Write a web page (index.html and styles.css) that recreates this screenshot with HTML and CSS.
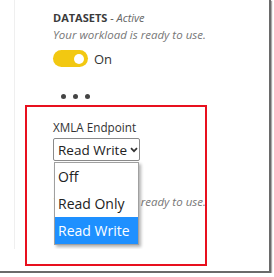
FILE: index.html
```html
<!DOCTYPE html>
<html>
<head>
<meta charset="utf-8">
<link rel="stylesheet" href="styles.css">
</head>
<body>
<div class="frame">
  <div class="panel">
    <div class="title"><span class="caps">DATASETS</span> <span class="state">- Active</span></div>
    <div class="desc">Your workload is ready to use.</div>
    <div class="toggle-row">
      <span class="toggle"><span class="knob"></span></span>
      <span class="toggle-label">On</span>
    </div>
    <div class="dots"><span></span><span></span><span></span></div>
    <div class="label">XMLA Endpoint</div>
    <div class="select-wrap">
      <div class="select">Read Write
        <svg class="chev" width="8" height="6" viewBox="0 0 8 6"><path d="M1 1.2 L4 4.2 L7 1.2" fill="none" stroke="#333" stroke-width="1.7"/></svg>
      </div>
      <ul class="options">
        <li>Off</li>
        <li>Read Only</li>
        <li class="sel">Read Write</li>
      </ul>
    </div>
    <div class="desc desc2">Your workload is ready to use.</div>
    <div class="label clipped">Max Memory (%)</div>
  </div>
  <div class="highlight"></div>
</div>
</body>
</html>
```

FILE: styles.css
```css
html, body {
  margin: 0;
  padding: 0;
  background: #fff;
}
body {
  font-family: "Open Sans", "Noto Sans", sans-serif;
  color: #333;
}
.frame {
  position: relative;
  width: 269px;
  height: 271px;
  border-right: 2px solid #6a6a6a;
  border-bottom: 2px solid #6a6a6a;
  box-shadow: 1px 1px 1px #aaa;
  background: #fff;
}
.panel {
  margin-left: 14px;
  border-left: 1px solid #efefef;
  padding-left: 38px;
  height: 249px;
  overflow: hidden;
  box-sizing: border-box;
}
.title {
  padding-top: 10px;
  font-size: 11px;
  line-height: 15px;
}
.caps {
  font-weight: 700;
  color: #3b3b3b;
}
.state {
  font-style: italic;
  color: #666;
}
.desc {
  font-size: 11.5px;
  line-height: 16px;
  font-style: italic;
  color: #777;
  margin-top: 2px;
}
.toggle-row {
  display: flex;
  align-items: center;
  margin-top: 7px;
  height: 17px;
}
.toggle {
  width: 35px;
  height: 17px;
  border-radius: 9px;
  background: #f2c811;
  position: relative;
  display: flex;
  align-items: center;
  justify-content: flex-end;
  padding-right: 4px;
  box-sizing: border-box;
}
.knob {
  width: 10px;
  height: 10px;
  border-radius: 50%;
  background: #fff;
}
.toggle-label {
  margin-left: 6px;
  font-size: 13px;
  color: #333;
}
.dots {
  display: flex;
  gap: 7px;
  margin-top: 27px;
  margin-left: 8px;
}
.dots span {
  width: 5px;
  height: 5px;
  border-radius: 50%;
  background: #444;
}
.label {
  font-size: 11.7px;
  line-height: 16px;
  color: #333;
  margin-top: 20px;
}
.select-wrap {
  position: relative;
  margin-top: 3px;
  width: 87px;
}
.select {
  height: 23px;
  box-sizing: border-box;
  border: 1px solid #8a8a8a;
  border-radius: 2px;
  display: flex;
  align-items: center;
  padding-left: 4px;
  gap: 3px;
  font-size: 13.5px;
  color: #222;
}
.chev {
  display: block;
}
.options {
  position: absolute;
  top: 24px;
  left: 1px;
  width: 85px;
  margin: 0;
  padding: 0;
  list-style: none;
  background: #fff;
  border: 1px solid #a0a0a0;
  box-shadow: 2px 2px 3px rgba(0,0,0,0.3);
  box-sizing: border-box;
  z-index: 2;
}
.options li {
  height: 27px;
  line-height: 27px;
  padding-left: 3px;
  font-size: 14px;
  color: #222;
}
.options li.sel {
  background: #1e90ff;
  color: #fff;
}
.desc2 {
  margin-top: 33px;
}
.clipped {
  margin-top: 35px;
}
.highlight {
  position: absolute;
  left: 25px;
  top: 105px;
  width: 182px;
  height: 161px;
  border: 2px solid #e8101e;
  box-sizing: border-box;
  z-index: 3;
}
```
